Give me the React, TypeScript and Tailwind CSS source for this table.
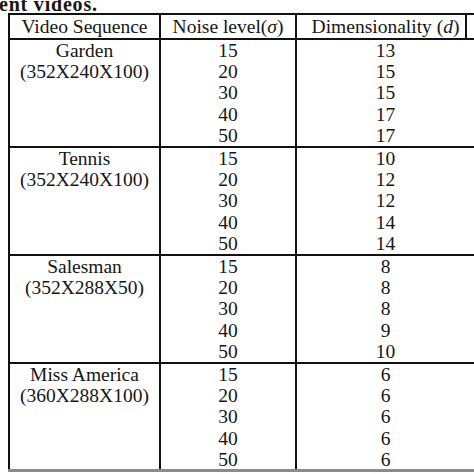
type Group = {
  name: string;
  size: string;
  rows: [number, number][];
};

const groups: Group[] = [
  {
    name: "Garden",
    size: "(352X240X100)",
    rows: [
      [15, 13],
      [20, 15],
      [30, 15],
      [40, 17],
      [50, 17],
    ],
  },
  {
    name: "Tennis",
    size: "(352X240X100)",
    rows: [
      [15, 10],
      [20, 12],
      [30, 12],
      [40, 14],
      [50, 14],
    ],
  },
  {
    name: "Salesman",
    size: "(352X288X50)",
    rows: [
      [15, 8],
      [20, 8],
      [30, 8],
      [40, 9],
      [50, 10],
    ],
  },
  {
    name: "Miss America",
    size: "(360X288X100)",
    rows: [
      [15, 6],
      [20, 6],
      [30, 6],
      [40, 6],
      [50, 6],
    ],
  },
];

const serif = { fontFamily: '"Liberation Serif", "Times New Roman", serif' };

function GroupBlock({ group, last }: { group: Group; last: boolean }) {
  return (
    <div
      className={`flex h-[108px] ${
        last ? "border-b-[3px] border-[#8a8a8a]" : "border-b-2 border-[#111]"
      }`}
    >
      <div className="flex w-[151px] flex-col border-l-2 border-[#111]">
        <div className="flex h-[21.2px] items-center justify-center">{group.name}</div>
        <div className="flex h-[21.2px] items-center justify-center">{group.size}</div>
      </div>
      <div className="flex w-[136px] flex-col border-l-2 border-[#111]">
        {group.rows.map(([noise]) => (
          <div key={noise} className="flex h-[21.2px] items-center justify-center">
            {noise}
          </div>
        ))}
      </div>
      <div className="flex w-[179px] flex-col border-l-2 border-[#111]">
        {group.rows.map(([noise, dim]) => (
          <div key={noise} className="flex h-[21.2px] items-center justify-center">
            {dim}
          </div>
        ))}
      </div>
    </div>
  );
}

export default function App() {
  return (
    <div
      className="h-[474px] w-[474px] overflow-hidden bg-white text-[19.5px] text-[#161616]"
      style={serif}
    >
      <div className="relative -left-[1px] -top-[2px] h-[13px] text-[20px] font-bold leading-[13px] tracking-[0.8px]">
        ent videos.
      </div>

      <div className="ml-[8px] w-[466px] border-t-2 border-[#111]">
        {/* header */}
        <div className="relative flex h-[25px] border-b-2 border-[#111] leading-[23px]">
          <div className="flex w-[151px] items-center justify-center border-l-2 border-[#111]">
            Video Sequence
          </div>
          <div className="flex w-[136px] items-center justify-center border-l-2 border-[#111]">
            Noise level(<i>σ</i>)
          </div>
          <div className="flex w-[179px] items-center justify-center border-l-2 border-[#111]">
            Dimensionality (<i>d</i>)
          </div>
          <span className="absolute left-[457px] top-0 h-full w-[2px] bg-[#111]" />
        </div>

        {groups.map((g, i) => (
          <GroupBlock key={g.name} group={g} last={i === groups.length - 1} />
        ))}
      </div>
    </div>
  );
}
